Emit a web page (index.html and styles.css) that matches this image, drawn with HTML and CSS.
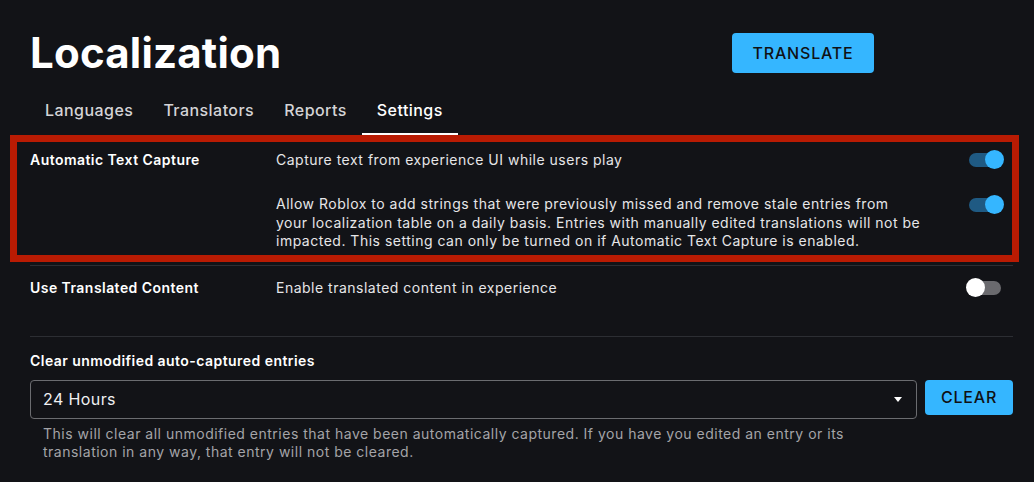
FILE: index.html
```html
<!DOCTYPE html>
<html>

<head>
    <title>Localization</title>
    <link rel="stylesheet" href="styles.css">
</head>

<body>
    <div class="page">
        <div class="header">
            <h1>Localization</h1>
            <button class="btn btn-translate">TRANSLATE</button>
        </div>

        <div class="tabs">
            <div class="tab">Languages</div>
            <div class="tab">Translators</div>
            <div class="tab">Reports</div>
            <div class="tab active">Settings</div>
        </div>

        <div class="highlight">
            <div class="setting">
                <div class="label">Automatic Text Capture</div>
                <div class="desc">Capture text from experience UI while users play</div>
                <div class="toggle on"></div>

                <div class="label"></div>
                <div class="desc sub">Allow Roblox to add strings that were previously missed and remove stale entries from your localization table on a daily basis. Entries with manually edited translations will not be impacted. This setting can only be turned on if Automatic Text Capture is enabled.</div>
                <div class="toggle on sub-toggle"></div>
            </div>
        </div>

        <div class="setting plain">
            <div class="label">Use Translated Content</div>
            <div class="desc">Enable translated content in experience</div>
            <div class="toggle"></div>
        </div>

        <div class="clear-section">
            <div class="label">Clear unmodified auto-captured entries</div>
            <div class="clear-row">
                <div class="select">
                    <span>24 Hours</span>
                    <span class="caret"></span>
                </div>
                <button class="btn btn-clear">CLEAR</button>
            </div>
            <p class="help">This will clear all unmodified entries that have been automatically captured. If you have you edited an entry or its translation in any way, that entry will not be cleared.</p>
        </div>
    </div>
</body>
</html>
```

FILE: styles.css
```css
html {
    background-color: #121317;
}

body {
    margin: 0;
    font-family: Inter, "Noto Sans", sans-serif;
    color: #ffffff;
    background-color: #121317;
}

.page {
    padding: 33px 21px 0 30px;
}

.header {
    display: grid;
    grid-template-columns: 702px auto;
    align-items: center;
    height: 40px;
}

h1 {
    margin: 0;
    font-size: 42px;
    line-height: 40px;
    font-weight: 700;
    letter-spacing: 0.2px;
}

.btn {
    border: none;
    border-radius: 4px;
    background-color: #35b6ff;
    color: #101114;
    font-family: inherit;
    font-weight: 500;
    letter-spacing: 0.8px;
    cursor: pointer;
}

.btn-translate {
    width: 142px;
    height: 40px;
    font-size: 16px;
}

.tabs {
    display: flex;
    margin-top: 25px;
}

.tab {
    padding: 0 15px 11px;
    font-size: 16px;
    font-weight: 500;
    line-height: 24px;
    letter-spacing: 0.45px;
    color: #d4d4d6;
    border-bottom: 2px solid transparent;
}

.tab.active {
    color: #ffffff;
    border-bottom-color: #ffffff;
}

.highlight {
    margin: 0 -6px 0 -20px;
    padding: 8px 8px 4px 13px;
    border: 7px solid #b91b03;
}

.setting {
    display: grid;
    grid-template-columns: 246px 1fr 38px;
    align-items: start;
}

.label {
    font-size: 14px;
    font-weight: 600;
    line-height: 20px;
    letter-spacing: 0.45px;
}

.desc {
    font-size: 14px;
    line-height: 20px;
    letter-spacing: 0.5px;
    color: #e6e6e8;
    max-width: 647px;
}

.desc.sub {
    margin-top: 25px;
    line-height: 18.6px;
}

.toggle {
    position: relative;
    width: 38px;
    height: 20px;
}

.toggle::before {
    content: "";
    position: absolute;
    left: 3px;
    right: 3px;
    top: 3px;
    height: 14px;
    border-radius: 7px;
    background-color: #6a6a6e;
}

.toggle::after {
    content: "";
    position: absolute;
    left: 0;
    top: 0;
    width: 19px;
    height: 19px;
    border-radius: 50%;
    background-color: #ffffff;
}

.toggle.on::before {
    background-color: #1f5a83;
}

.toggle.on::after {
    left: auto;
    right: 0;
    background-color: #35b6ff;
}

.toggle.sub-toggle {
    margin-top: 25px;
}

.setting.plain {
    margin-top: 3px;
    padding: 12px 9px 38px 0;
    border-top: 1px solid #2c2e33;
    border-bottom: 1px solid #2c2e33;
}

.clear-section {
    padding-top: 14px;
}

.clear-row {
    display: flex;
    gap: 8px;
    margin-top: 9px;
}

.select {
    flex: 1;
    height: 37px;
    display: flex;
    align-items: center;
    justify-content: space-between;
    padding: 0 14px 0 12px;
    border: 1px solid #6b6c70;
    border-radius: 4px;
    font-size: 16px;
    letter-spacing: 0.4px;
    color: #f0f0f2;
}

.caret {
    width: 0;
    height: 0;
    border-left: 4px solid transparent;
    border-right: 4px solid transparent;
    border-top: 5px solid #ffffff;
}

.btn-clear {
    width: 88px;
    height: 35px;
    font-size: 16px;
}

.help {
    margin: 6px 0 0 13px;
    max-width: 830px;
    font-size: 14px;
    line-height: 18px;
    letter-spacing: 0.5px;
    color: #a4a4a8;
}
```
